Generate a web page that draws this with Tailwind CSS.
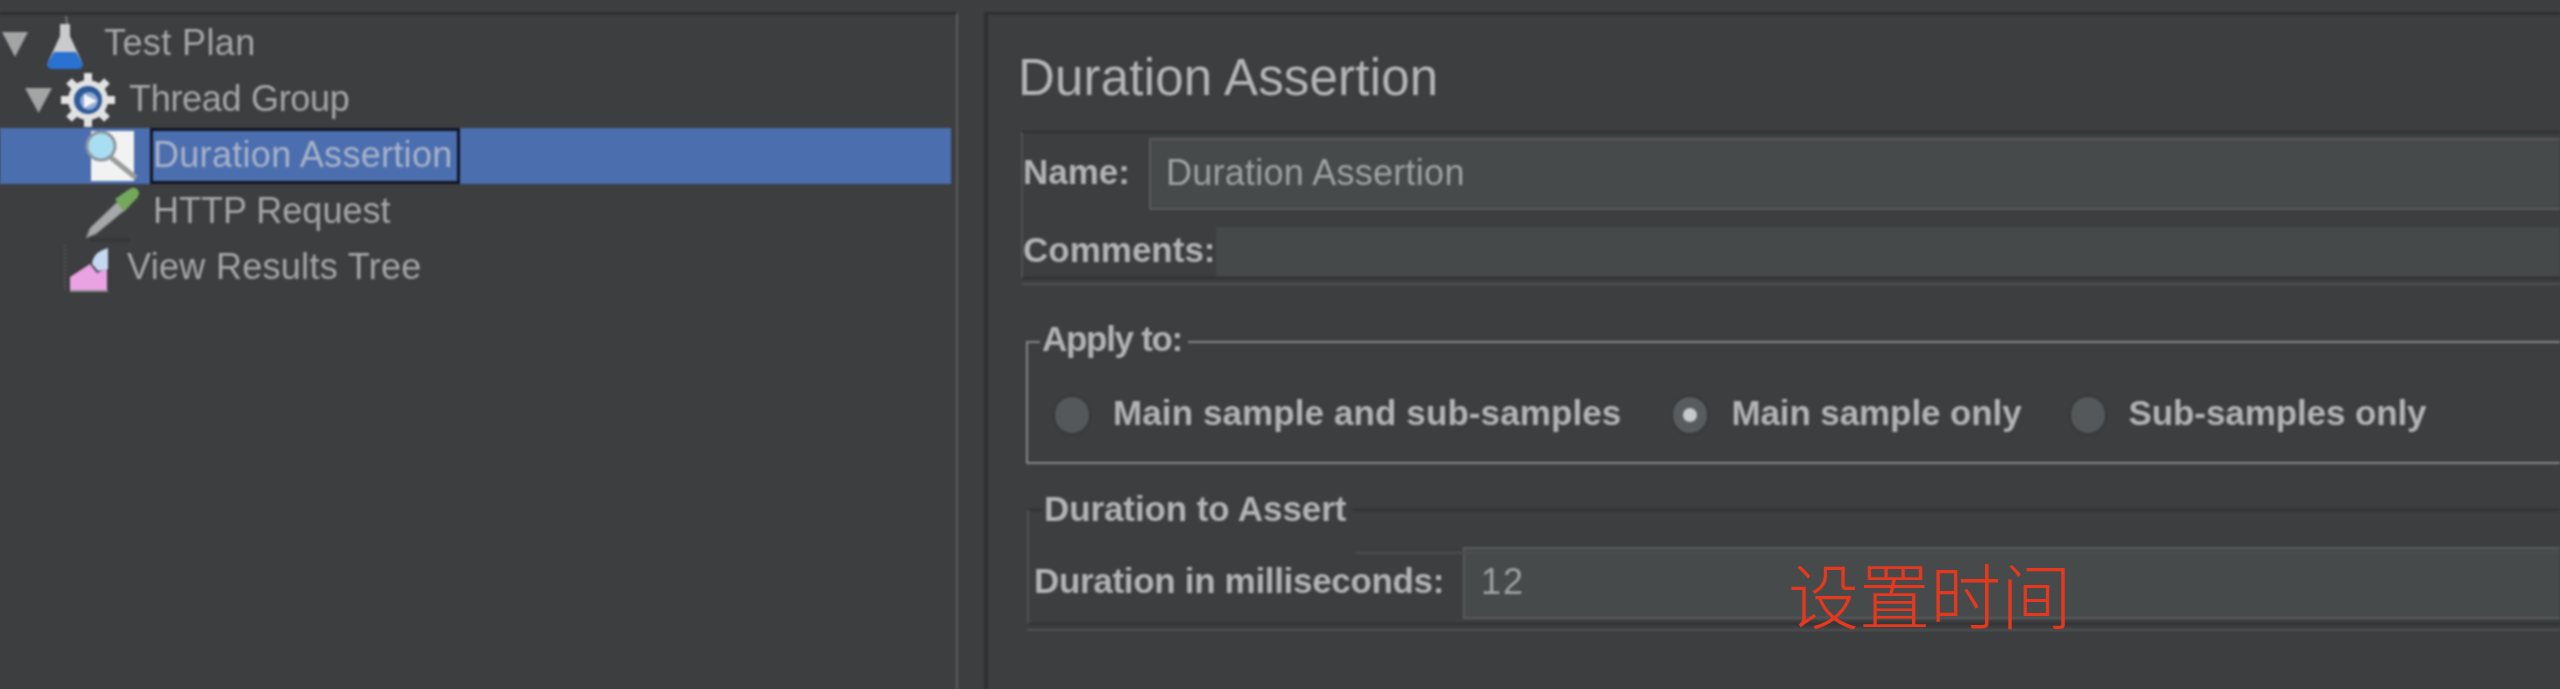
<!DOCTYPE html>
<html lang="en">
<head>
  <meta charset="UTF-8" />
  <title>Duration Assertion</title>
  <script src="https://cdn.jsdelivr.net/npm/@tailwindcss/browser@4"></script>
</head>
<body class="bg-[#3d3e40]">
<div class="relative w-[2560px] h-[689px] overflow-hidden bg-[#3d3e40] font-['Liberation_Sans',Arial,sans-serif] text-[#b2b3b4]">
  <div class="blur-[1.2px] h-full flex flex-col">
    <!-- top strip -->
    <div class="h-[12px] shrink-0"></div>

    <div class="flex flex-1 min-h-0">
      <!-- tree pane -->
      <aside class="w-[958px] shrink-0 border-t-[3px] border-r-2 border-t-[#2f3031] border-r-[#5c5e60] pt-px text-[36px] text-[#a6a7a8]">
        <!-- Test Plan -->
        <div class="h-14 flex items-center pl-[2px] pr-[6px]">
          <svg class="w-[26px] h-[25px]" viewBox="0 0 26 25"><path d="M0 0H26L13 25Z" fill="#a3a4a4"/></svg>
          <svg class="ml-[9px] w-[56px] h-[56px] overflow-visible" viewBox="0 0 56 56">
            <path d="M29 0 30 8" stroke="#777" stroke-width="2" fill="none"/>
            <path d="M23 8H33V20L45 46Q47 52 41 52H15Q9 52 11 46L23 20Z" fill="#c9cbcd"/>
            <path d="M17 36H39L45 46Q47 53 41 53H15Q9 53 11 46Z" fill="#2a72d2"/>
          </svg>
          <span class="ml-[11px] mb-[3px] tracking-[0.4px]">Test Plan</span>
        </div>
        <!-- Thread Group -->
        <div class="h-14 flex items-center pl-[25px]">
          <svg class="w-[27px] h-[25px]" viewBox="0 0 27 25"><path d="M0 0H27L13.500 25Z" fill="#a3a4a4"/></svg>
          <svg class="ml-[8px] w-[56px] h-[56px]" viewBox="0 0 56 56">
            <circle cx="28" cy="28" r="20" fill="#e2e2e2"/>
            <g stroke="#e2e2e2" stroke-width="8">
              <path d="M28 1V55M1 28H55M9 9 47 47M47 9 9 47"/>
            </g>
            <circle cx="28" cy="28" r="14" fill="#2d5796"/>
            <circle cx="29" cy="29" r="9" fill="#8eaad4"/>
            <path d="M24 22 37 29 24 36Z" fill="#f2f4f8"/>
          </svg>
          <span class="ml-[13px] mb-[3px] tracking-[-0.3px]">Thread Group</span>
        </div>
        <!-- Duration Assertion, selected -->
        <div class="h-14 flex items-center pl-[84px] bg-[#4b6eaf] mr-[5px]">
          <svg class="w-[56px] h-[56px] overflow-visible" viewBox="0 0 56 56">
            <rect x="7" y="3" width="43" height="50" fill="#f2f2f2"/>
            <path d="M24 27 52 50" stroke="#9a9c9c" stroke-width="5"/>
            <circle cx="17" cy="18" r="14" fill="#a9def2" stroke="#8d969e" stroke-width="3"/>
          </svg>
          <span class="ml-[10px] w-[310px] h-14 border-[3px] border-[#0f1522] flex items-center text-[#a9b4c8] tracking-[0.3px]"><span class="mb-[3px]">Duration Assertion</span></span>
        </div>
        <!-- HTTP Request -->
        <div class="h-14 flex items-center pl-[84px]">
          <svg class="w-[56px] h-[56px] overflow-visible" viewBox="0 0 56 56">
            <path d="M6 44 L33 18 L41 26 L12 50 L2 54Z" fill="#a6a8a8" stroke="#6f7171" stroke-width="1"/>
            <path d="M31 15 44 6Q50 1 54 6 57 11 51 16L40 28Z" fill="#73a85a"/>
            <path d="M6 56H46" stroke="#343537" stroke-width="3"/>
          </svg>
          <span class="ml-[13px] mb-[3px]">HTTP Request</span>
        </div>
        <!-- View Results Tree -->
        <div class="h-14 flex items-center pl-[62px]">
          <svg class="w-[56px] h-[56px] overflow-visible" viewBox="0 0 56 56">
            <path d="M3 5V50" stroke="#5c5e60" stroke-width="1.500" stroke-dasharray="2 2"/>
            <path d="M8 50V37L28 24 35 33 45 28V50Z" fill="#e9a3e2"/>
            <path d="M30 24Q31 12 46 8V29L36 31Z" fill="#c5d8f2"/>
            <path d="M8 51H46" stroke="#d8d8d8" stroke-width="1"/>
          </svg>
          <span class="ml-[9px] mb-[3px] tracking-[0.3px]">View Results Tree</span>
        </div>
      </aside>

      <div class="w-[26px] shrink-0"></div>

      <!-- right panel -->
      <main class="flex-1 min-w-0 border-t-[3px] border-l-[4px] border-t-[#2f3031] border-l-[#2f3031] pl-[30px] text-[35px] font-bold">
        <h2 class="mt-[34px] h-[60px] leading-[58px] text-[51px] tracking-[0.2px] font-normal text-[#b4b5b6]">Duration Assertion</h2>

        <!-- name and comments -->
        <div class="mt-[22px] ml-[3px] border-b-2 border-[#505254] pb-[4px]">
          <div class="border-t-2 border-l-2 border-b-2 border-t-[#303133] border-l-[#505254] border-b-[#303133] pt-[5px] pb-px">
            <div class="flex items-center h-[72px]">
              <label class="w-[126px] shrink-0 mb-[3px]">Name:</label>
              <input value="Duration Assertion" class="flex-1 min-w-0 h-full pl-[15px] pb-[3px] font-normal text-[36px] tracking-[0.25px] text-[#a0a2a3] bg-[#464a4b] border-l-2 border-y-2 border-[#595c5e]" />
            </div>
            <div class="flex items-center h-[49px] mt-[17px]">
              <label class="w-[193px] shrink-0 mb-[3px]">Comments:</label>
              <input class="flex-1 min-w-0 h-full bg-[#45494a]" />
            </div>
          </div>
        </div>

        <!-- apply to -->
        <fieldset class="mt-[37px] ml-[8px] border-2 border-r-0 border-[#85878a] pb-[27px]">
          <legend class="ml-[12px] px-[2px] pr-[6px] h-[40px] leading-[34px] tracking-[-1.3px]">Apply to:</legend>
          <div class="flex items-center h-[40px] mt-[33px] pl-[25px]">
            <span class="w-[38px] h-[40px] rounded-full bg-[#54585a] border-2 border-[#37393b]"></span>
            <span class="ml-[22px] mb-[3px] tracking-[0.1px]">Main sample and sub-samples</span>
            <span class="ml-[50px] w-[38px] h-[40px] rounded-full bg-[#585c5e] border-2 border-[#37393b] flex items-center justify-center">
              <span class="w-[14px] h-[14px] rounded-full bg-[#c8c9ca]"></span>
            </span>
            <span class="ml-[22px] mb-[3px] tracking-[-0.1px]">Main sample only</span>
            <span class="ml-[47px] w-[38px] h-[40px] rounded-full bg-[#54585a] border-2 border-[#37393b]"></span>
            <span class="ml-[22px] mb-[3px] tracking-[-0.1px]">Sub-samples only</span>
          </div>
        </fieldset>

        <!-- duration to assert -->
        <fieldset class="relative mt-[26px] ml-[9px] border-2 border-r-0 border-t-[#303133] border-l-[#505254] border-b-[#303133] pb-[4px]">
          <legend class="ml-[13px] px-[2px] pr-[6px] h-[40px] leading-[38px] tracking-[-0.1px]">Duration to Assert</legend>
          <div class="absolute left-[327px] right-0 top-[22px] h-[2px] bg-[#4c4f51]"></div>
          <div class="flex items-center h-[72px] mt-[17px] pl-[5px]">
            <label class="w-[429px] shrink-0 mb-[3px] tracking-[-0.32px]">Duration in milliseconds:</label>
            <input value="12" class="flex-1 min-w-0 h-full pl-[16px] pb-[2px] font-normal text-[36px] tracking-[2px] text-[#a0a2a3] bg-[#464a4b] border-l-2 border-y-2 border-[#595c5e]" />
          </div>
        </fieldset>
        <div class="ml-[9px] mt-[4px] h-[2px] bg-[#505254]"></div>
      </main>
    </div>
  </div>

  <!-- red annotation drawn on the screenshot -->
  <span class="absolute left-[1788px] top-[552px] text-[71px] leading-[80px] font-light text-[#e5391f] font-['Noto_Sans_CJK_SC',sans-serif]">设置时间</span>
</div>
</body>
</html>
